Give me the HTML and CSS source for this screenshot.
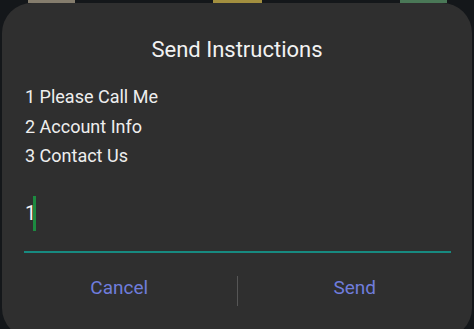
FILE: index.html
```html
<!DOCTYPE html>
<html lang="en">
  <head>
    <meta charset="UTF-8" />
    <meta name="viewport" content="width=device-width, initial-scale=1.0" />
    <title>Send Instructions</title>
    <link rel="stylesheet" href="styles.css">
  </head>
  <body>
    <div class="backdrop">
      <span class="tile tile-sand"></span>
      <span class="tile tile-gold"></span>
      <span class="tile tile-green"></span>
    </div>

    <div class="dialog">
      <h1 class="dialog-title">Send Instructions</h1>

      <ul class="options">
        <li>1 Please Call Me</li>
        <li>2 Account Info</li>
        <li>3 Contact Us</li>
      </ul>

      <div class="field">
        <span class="field-value">1</span>
        <span class="caret"></span>
      </div>

      <div class="actions">
        <button type="button" class="action">Cancel</button>
        <span class="divider"></span>
        <button type="button" class="action">Send</button>
      </div>
    </div>
  </body>
</html>
```

FILE: styles.css
```css
html,
body {
  height: 100%;
}
body {
  margin: 0;
  overflow: hidden;
  background-color: #14171a;
  font-family: Roboto, "Noto Sans", Arial, sans-serif;
  color: #ececec;
}
.backdrop {
  display: flex;
  height: 3px;
}
.tile {
  display: block;
  width: 47px;
  margin-left: 138px;
}
.tile-sand {
  margin-left: 28px;
  background-color: #857d6d;
}
.tile-gold {
  width: 49px;
  background-color: #a38f3f;
}
.tile-green {
  background-color: #4a7857;
}
.dialog {
  margin: 0 2px;
  height: 335px;
  background-color: #2f2f2f;
  border-radius: 30px;
}
.dialog-title {
  margin: 0;
  padding-top: 35px;
  text-align: center;
  font-size: 22px;
  font-weight: 400;
  line-height: 24px;
  color: #f2f2f2;
}
.options {
  list-style: none;
  margin: 20px 0 0;
  padding: 0 0 0 23px;
}
.options li {
  font-size: 18px;
  line-height: 29.5px;
  color: #eeeeee;
}
.field {
  display: flex;
  align-items: center;
  margin: 0 21px 0 22px;
  padding: 25px 0 20px 1px;
  border-bottom: 2px solid #178a80;
}
.field-value {
  font-size: 20px;
  line-height: 35px;
  color: #f4f4f4;
}
.caret {
  width: 2.5px;
  height: 35px;
  margin-left: -3px;
  background-color: #1c8a40;
}
.actions {
  display: flex;
  align-items: center;
  height: 76px;
}
.action {
  flex: 1;
  padding: 0 0 6px;
  border: none;
  background: none;
  font-family: inherit;
  font-size: 19px;
  color: #6f7ddc;
  cursor: pointer;
}
.divider {
  width: 1px;
  height: 30px;
  background-color: #565656;
}
```
